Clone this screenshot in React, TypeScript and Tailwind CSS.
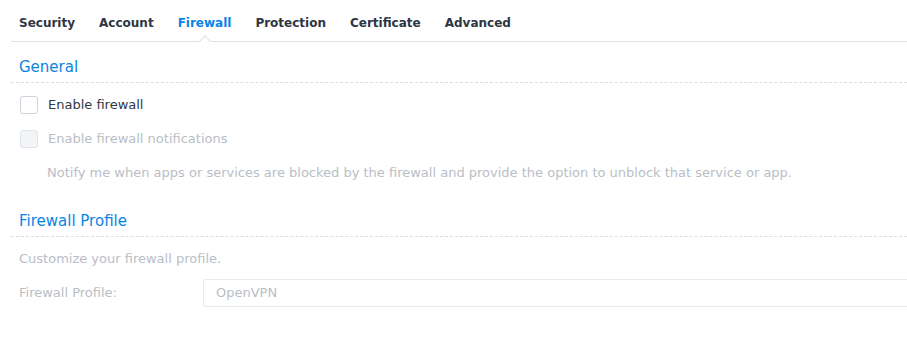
import { useState } from 'react';

const tabs = ['Security', 'Account', 'Firewall', 'Protection', 'Certificate', 'Advanced'];

function Checkbox({ checked, disabled, onChange }: { checked: boolean; disabled?: boolean; onChange?: () => void }) {
  return (
    <button
      type="button"
      disabled={disabled}
      onClick={onChange}
      className={`h-[18px] w-[18px] shrink-0 rounded-[3px] border ${
        disabled ? 'border-[#dfe3ea] bg-[#f2f4f7]' : 'border-[#cdd3dc] bg-white'
      }`}
    >
      {checked && (
        <svg viewBox="0 0 16 16" className="h-full w-full text-[#0086e5]">
          <path d="M3.5 8.5l3 3 6-7" fill="none" stroke="currentColor" strokeWidth="2" />
        </svg>
      )}
    </button>
  );
}

function SectionTitle({ children }: { children: string }) {
  return (
    <div className="border-b border-dashed border-[#d9dee6] pb-[5px] pl-2">
      <h2 className="text-[15px] leading-[20px] text-[#0a84e4]">{children}</h2>
    </div>
  );
}

export default function App() {
  const [active, setActive] = useState('Firewall');
  const [enabled, setEnabled] = useState(false);

  return (
    <div
      className="h-[347px] w-[907px] overflow-hidden bg-white pl-[11px] text-[13px] leading-[18px]"
      style={{ fontFamily: '"DejaVu Sans", Verdana, sans-serif' }}
    >
      {/* tabs */}
      <div className="flex h-[42px] items-center gap-6 border-b border-[#dde2e9] pl-2 pt-[4px]">
        {tabs.map((t) => (
          <button
            key={t}
            onClick={() => setActive(t)}
            className={`relative flex h-full items-center text-[12px] font-bold ${
              active === t ? 'text-[#0a84e4]' : 'text-[#2d3644]'
            }`}
          >
            {t}
            {active === t && (
              <span className="absolute -bottom-[4px] left-1/2 h-[8px] w-[8px] -translate-x-1/2 rotate-45 border-l border-t border-[#dde2e9] bg-white" />
            )}
          </button>
        ))}
      </div>

      <div className="pt-[15px]">
        <SectionTitle>General</SectionTitle>

        <div className="flex flex-col pl-[9px]">
          <label className="mt-[13px] flex h-[18px] items-center gap-[10px]">
            <Checkbox checked={enabled} onChange={() => setEnabled(!enabled)} />
            <span className="text-[#303945]">Enable firewall</span>
          </label>
          <label className="mt-4 flex h-[18px] items-center gap-[10px]">
            <Checkbox checked={false} disabled />
            <span className="text-[#b9bec6]">Enable firewall notifications</span>
          </label>
          <p className="mt-4 pl-[27px] text-[#b9bec6]">
            Notify me when apps or services are blocked by the firewall and provide the option to unblock that service or app.
          </p>
        </div>

        <div className="mt-[29px]">
          <SectionTitle>Firewall Profile</SectionTitle>
        </div>

        <p className="mt-[13px] pl-2 text-[#b9bec6]">Customize your firewall profile.</p>

        <div className="mt-[11px] flex items-center pl-2">
          <span className="w-[184px] text-[#b9bec6]">Firewall Profile:</span>
          <div className="flex h-[28px] flex-1 items-center rounded-l-[3px] border border-r-0 border-[#e6e9ee] pl-3 text-[#b9bec6]">
            OpenVPN
          </div>
        </div>
      </div>
    </div>
  );
}
